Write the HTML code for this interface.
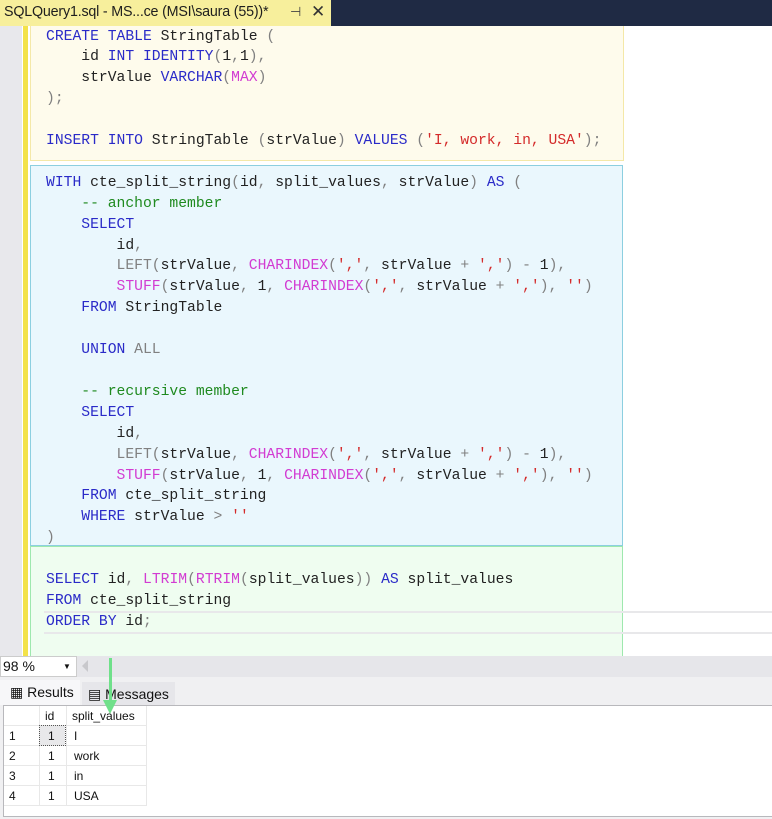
<!DOCTYPE html>
<html><head><meta charset="utf-8"><style>
body{margin:0;width:772px;height:819px;overflow:hidden;background:#fff;position:relative;font-family:"Liberation Sans",sans-serif}
.a{position:absolute}
pre{margin:0;font-family:"Liberation Mono",monospace;font-size:14.7px;line-height:20.9px;color:#222;position:absolute;left:46px;top:26.5px}
.k{color:#2a2ac8}.f{color:#d23cd2}.g{color:#808080}.s{color:#d42a2a}.c{color:#1f8a1f}
</style></head><body>
<div class="a" style="left:0;top:0;width:772px;height:26px;background:#1f2a44"></div>
<div class="a" style="left:0;top:0;width:331px;height:26px;background:#f7ef9c"></div>
<div class="a" style="left:4px;top:4px;font-size:14.3px;color:#1e1e1e;white-space:nowrap;letter-spacing:-0.2px">SQLQuery1.sql - MS...ce (MSI\saura (55))*</div>
<div class="a" style="left:290px;top:4px;font-size:13px;color:#444">⊣</div>
<div class="a" style="left:311px;top:2px;font-size:17px;color:#333">✕</div>
<div class="a" style="left:0;top:26px;width:22px;height:630px;background:#e8e8ec"></div>
<div class="a" style="left:23px;top:26px;width:5px;height:630px;background:#f3e24a"></div>
<div class="a" style="left:30px;top:26px;width:592px;height:134px;background:#fefbec;border:1px solid #f4e8a8;border-top:none"></div>
<div class="a" style="left:30px;top:165px;width:591px;height:379px;background:#eaf7fd;border:1px solid #8ccfe0"></div>
<div class="a" style="left:30px;top:546px;width:591px;height:111px;background:#effdf0;border:1px solid #9ee8ae"></div>
<div class="a" style="left:44px;top:611px;width:728px;height:19px;border-top:2px solid #e8e8ea;border-bottom:2px solid #e8e8ea"></div>
<pre><span class="k">CREATE TABLE</span> StringTable <span class="g">(</span>
    id <span class="k">INT IDENTITY</span><span class="g">(</span>1<span class="g">,</span>1<span class="g">),</span>
    strValue <span class="k">VARCHAR</span><span class="g">(</span><span class="f">MAX</span><span class="g">)</span>
<span class="g">);</span>

<span class="k">INSERT INTO</span> StringTable <span class="g">(</span>strValue<span class="g">)</span> <span class="k">VALUES</span> <span class="g">(</span><span class="s">'I, work, in, USA'</span><span class="g">);</span>

<span class="k">WITH</span> cte_split_string<span class="g">(</span>id<span class="g">,</span> split_values<span class="g">,</span> strValue<span class="g">)</span> <span class="k">AS</span> <span class="g">(</span>
    <span class="c">-- anchor member</span>
    <span class="k">SELECT</span>
        id<span class="g">,</span>
        <span class="g">LEFT(</span>strValue<span class="g">,</span> <span class="f">CHARINDEX</span><span class="g">(</span><span class="s">','</span><span class="g">,</span> strValue <span class="g">+</span> <span class="s">','</span><span class="g">)</span> <span class="g">-</span> 1<span class="g">),</span>
        <span class="f">STUFF</span><span class="g">(</span>strValue<span class="g">,</span> 1<span class="g">,</span> <span class="f">CHARINDEX</span><span class="g">(</span><span class="s">','</span><span class="g">,</span> strValue <span class="g">+</span> <span class="s">','</span><span class="g">),</span> <span class="s">''</span><span class="g">)</span>
    <span class="k">FROM</span> StringTable

    <span class="k">UNION</span> <span class="g">ALL</span>

    <span class="c">-- recursive member</span>
    <span class="k">SELECT</span>
        id<span class="g">,</span>
        <span class="g">LEFT(</span>strValue<span class="g">,</span> <span class="f">CHARINDEX</span><span class="g">(</span><span class="s">','</span><span class="g">,</span> strValue <span class="g">+</span> <span class="s">','</span><span class="g">)</span> <span class="g">-</span> 1<span class="g">),</span>
        <span class="f">STUFF</span><span class="g">(</span>strValue<span class="g">,</span> 1<span class="g">,</span> <span class="f">CHARINDEX</span><span class="g">(</span><span class="s">','</span><span class="g">,</span> strValue <span class="g">+</span> <span class="s">','</span><span class="g">),</span> <span class="s">''</span><span class="g">)</span>
    <span class="k">FROM</span> cte_split_string
    <span class="k">WHERE</span> strValue <span class="g">&gt;</span> <span class="s">''</span>
<span class="g">)</span>

<span class="k">SELECT</span> id<span class="g">,</span> <span class="f">LTRIM</span><span class="g">(</span><span class="f">RTRIM</span><span class="g">(</span>split_values<span class="g">))</span> <span class="k">AS</span> split_values
<span class="k">FROM</span> cte_split_string
<span class="k">ORDER BY</span> id<span class="g">;</span></pre>
<div class="a" style="left:0;top:656px;width:772px;height:21px;background:#e6e6ea"></div>
<div class="a" style="left:0;top:656px;width:73px;height:19px;background:#fff;border:1px solid #ccc;font-size:14px;line-height:19px;padding-left:2px;color:#111">98 %<span style="position:absolute;left:62px;top:0;font-size:8px">▼</span></div>
<div class="a" style="left:82px;top:660px;width:0;height:0;border-top:6px solid transparent;border-bottom:6px solid transparent;border-right:6px solid #c8c8cc"></div>
<div class="a" style="left:0;top:677px;width:772px;height:142px;background:#f0f0f2"></div>
<div class="a" style="left:0;top:680px;width:80px;height:25px;background:#f7f7f9"></div>
<div class="a" style="left:10px;top:684px;font-size:14px;color:#111">▦ Results</div>
<div class="a" style="left:82px;top:682px;width:93px;height:23px;background:#e6e6ea"></div>
<div class="a" style="left:88px;top:686px;font-size:14px;color:#111">▤ Messages</div>
<div class="a" style="left:3px;top:705px;width:769px;height:110px;background:#fff;border:1px solid #b8b8bc"></div>
<div class="a" style="left:4px;top:706px;width:143px;height:100px;font-size:12px;color:#111">
<div class="a" style="left:35px;top:0;width:1px;height:100px;background:#e8e8e8"></div>
<div class="a" style="left:62px;top:0;width:1px;height:100px;background:#e8e8e8"></div>
<div class="a" style="left:142px;top:0;width:1px;height:100px;background:#e8e8e8"></div>
<div class="a" style="left:0;top:19px;width:143px;height:1px;background:#e8e8e8"></div>
<div class="a" style="left:0;top:39px;width:143px;height:1px;background:#e8e8e8"></div>
<div class="a" style="left:0;top:59px;width:143px;height:1px;background:#e8e8e8"></div>
<div class="a" style="left:0;top:79px;width:143px;height:1px;background:#e8e8e8"></div>
<div class="a" style="left:0;top:99px;width:143px;height:1px;background:#e8e8e8"></div>
<div class="a" style="left:41px;top:3px">id</div><div class="a" style="left:68px;top:3px">split_values</div>
<div class="a" style="left:36px;top:20px;width:25px;height:19px;background:#e8e8ea;outline:1px dotted #555"></div>
<div class="a" style="left:5px;top:23px">1</div><div class="a" style="left:44px;top:23px">1</div><div class="a" style="left:70px;top:23px">I</div>
<div class="a" style="left:5px;top:43px">2</div><div class="a" style="left:44px;top:43px">1</div><div class="a" style="left:70px;top:43px">work</div>
<div class="a" style="left:5px;top:63px">3</div><div class="a" style="left:44px;top:63px">1</div><div class="a" style="left:70px;top:63px">in</div>
<div class="a" style="left:5px;top:83px">4</div><div class="a" style="left:44px;top:83px">1</div><div class="a" style="left:70px;top:83px">USA</div>
</div>
<div class="a" style="left:109px;top:658px;width:3px;height:48px;background:#6fe08a"></div>
<div class="a" style="left:103px;top:700px;width:0;height:0;border-left:7px solid transparent;border-right:7px solid transparent;border-top:14px solid #6fe08a"></div>
</body></html>
